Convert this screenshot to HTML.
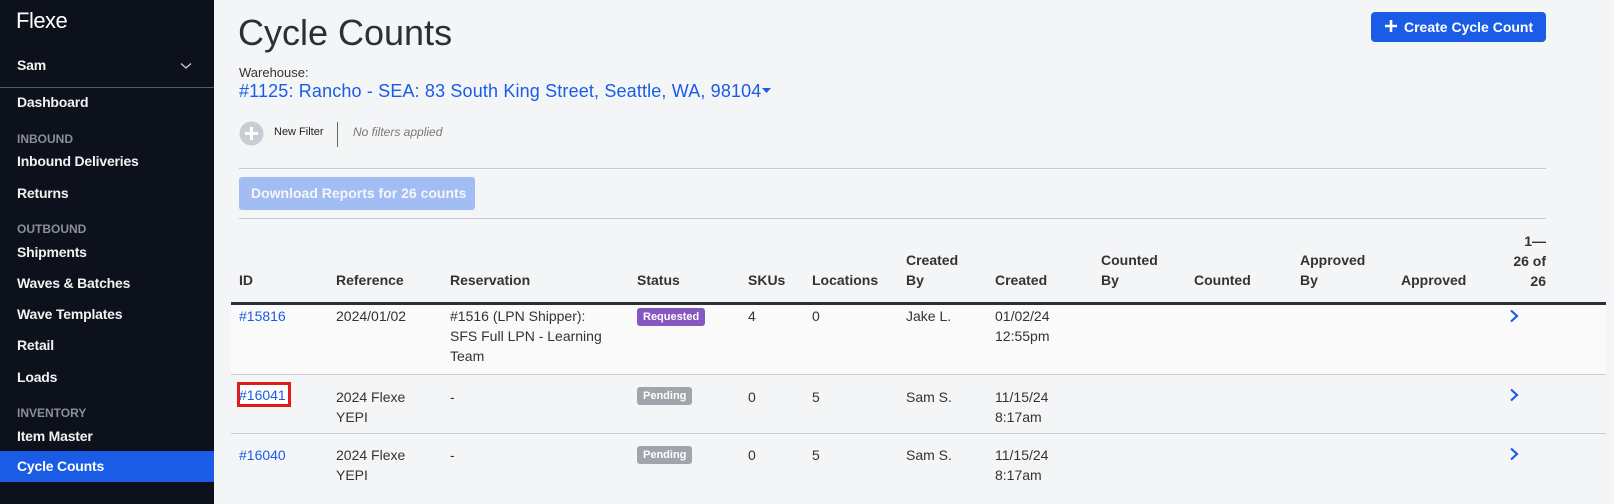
<!DOCTYPE html>
<html><head><meta charset="utf-8"><style>
*{margin:0;padding:0;box-sizing:border-box}
body{width:1614px;height:504px;overflow:hidden;background:#f4f5f7;font-family:"Liberation Sans",sans-serif;position:relative;color:#333}
.a{position:absolute;white-space:nowrap}
#sb{position:absolute;left:0;top:0;width:214px;height:504px;background:#0d111c;color:#fff}
#sb .i{position:absolute;left:17px;font-size:14px;font-weight:bold;color:#f2f2f2;letter-spacing:-0.2px}
#sb .h{position:absolute;left:17px;font-size:12px;font-weight:bold;color:#8a8e98}
.th{position:absolute;font-size:14px;font-weight:bold;color:#333;line-height:20px}
.td{position:absolute;font-size:14px;color:#333;line-height:20px}
.lk{color:#1a5ce5}
.bd{position:absolute;font-size:11px;font-weight:bold;color:#fff;padding:0 6px;height:18px;line-height:18px;border-radius:3px}
</style></head><body>
<div id="sb">
<div class="a" style="left:16px;top:8px;font-size:22px;color:#fff;letter-spacing:-0.5px">Flexe</div>
<div class="i" style="top:57px">Sam</div>
<svg class="a" style="left:180px;top:62px" width="12" height="8"><path d="M1 1.5 L6 6 L11 1.5" stroke="#ccc" stroke-width="1.3" fill="none"/></svg>
<div class="a" style="left:0;top:87px;width:214px;height:1px;background:#555a63"></div>
<div class="i" style="top:94px">Dashboard</div>
<div class="h" style="top:132px">INBOUND</div>
<div class="i" style="top:153px">Inbound Deliveries</div>
<div class="i" style="top:185px">Returns</div>
<div class="h" style="top:222px">OUTBOUND</div>
<div class="i" style="top:244px">Shipments</div>
<div class="i" style="top:275px">Waves &amp; Batches</div>
<div class="i" style="top:306px">Wave Templates</div>
<div class="i" style="top:337px">Retail</div>
<div class="i" style="top:369px">Loads</div>
<div class="h" style="top:406px">INVENTORY</div>
<div class="i" style="top:428px">Item Master</div>
<div class="a" style="left:0;top:451px;width:214px;height:31px;background:#1a5ce5"></div>
<div class="i" style="top:458px;color:#fff">Cycle Counts</div>
</div>

<div class="a" style="left:238px;top:12px;font-size:36px;color:#2c2f36">Cycle Counts</div>
<div class="a" style="left:1371px;top:12px;width:175px;height:30px;background:#1a5ce5;border-radius:4px;color:#fff;font-size:14px;font-weight:bold;line-height:30px;padding-left:33px">Create Cycle Count</div>
<svg class="a" style="left:1384px;top:19px" width="14" height="14"><path d="M7 1V13M1 7H13" stroke="#fff" stroke-width="2.6"/></svg>
<div class="a" style="left:239px;top:65px;font-size:13px;color:#333">Warehouse:</div>
<div class="a lk" style="left:239px;top:81px;font-size:18px;letter-spacing:0.15px">#1125: Rancho - SEA: 83 South King Street, Seattle, WA, 98104<svg width="9" height="6" style="margin-left:1px;vertical-align:3px"><path d="M0 0H9L4.5 5Z" fill="#1a5ce5"/></svg></div>
<svg class="a" style="left:239px;top:121px" width="25" height="25"><circle cx="12.5" cy="12.5" r="12" fill="#c9ccd2"/><path d="M12.5 6V19M6 12.5H19" stroke="#fff" stroke-width="3"/></svg>
<div class="a" style="left:274px;top:126px;font-size:11px;color:#222">New Filter</div>
<div class="a" style="left:337px;top:122px;width:1px;height:25px;background:#666"></div>
<div class="a" style="left:353px;top:125px;font-size:12px;font-style:italic;color:#777">No filters applied</div>
<div class="a" style="left:239px;top:168px;width:1307px;height:1px;background:#c8cad0"></div>
<div class="a" style="left:239px;top:177px;width:236px;height:33px;background:#a2bdf4;border-radius:3px;color:#f4f6fb;font-size:14px;font-weight:bold;line-height:33px;padding-left:12px">Download Reports for 26 counts</div>
<div class="a" style="left:239px;top:218px;width:1307px;height:1px;background:#c8cad0"></div>

<div class="th" style="left:239px;top:270px">ID</div>
<div class="th" style="left:336px;top:270px">Reference</div>
<div class="th" style="left:450px;top:270px">Reservation</div>
<div class="th" style="left:637px;top:270px">Status</div>
<div class="th" style="left:748px;top:270px">SKUs</div>
<div class="th" style="left:812px;top:270px">Locations</div>
<div class="th" style="left:906px;top:250px">Created<br>By</div>
<div class="th" style="left:995px;top:270px">Created</div>
<div class="th" style="left:1101px;top:250px">Counted<br>By</div>
<div class="th" style="left:1194px;top:270px">Counted</div>
<div class="th" style="left:1300px;top:250px">Approved<br>By</div>
<div class="th" style="left:1401px;top:270px">Approved</div>
<div class="th" style="left:1490px;top:231px;width:56px;text-align:right">1—<br>26 of<br>26</div>
<div class="a" style="left:231px;top:302px;width:1375px;height:3px;background:#2c2f36"></div>

<div class="a" style="left:231px;top:305px;width:1375px;height:70px;background:#fafafb"></div>
<div class="a" style="left:231px;top:374px;width:1375px;height:1px;background:#c8cad6"></div>
<div class="a" style="left:231px;top:433px;width:1375px;height:1px;background:#c8cad6"></div>

<div class="td lk" style="left:239px;top:306px">#15816</div>
<div class="td" style="left:336px;top:306px">2024/01/02</div>
<div class="td" style="left:450px;top:306px">#1516 (LPN Shipper):<br>SFS Full LPN - Learning<br>Team</div>
<div class="bd" style="left:637px;top:308px;background:#8458c0">Requested</div>
<div class="td" style="left:748px;top:306px">4</div>
<div class="td" style="left:812px;top:306px">0</div>
<div class="td" style="left:906px;top:306px">Jake L.</div>
<div class="td" style="left:995px;top:306px">01/02/24<br>12:55pm</div>

<div class="a" style="left:237px;top:382px;width:54px;height:25px;border:3px solid #e01b1b;background:#fff"></div>
<div class="td lk" style="left:239px;top:385px">#16041</div>
<div class="td" style="left:336px;top:387px">2024 Flexe<br>YEPI</div>
<div class="td" style="left:450px;top:387px">-</div>
<div class="bd" style="left:637px;top:387px;background:#a1a4ab">Pending</div>
<div class="td" style="left:748px;top:387px">0</div>
<div class="td" style="left:812px;top:387px">5</div>
<div class="td" style="left:906px;top:387px">Sam S.</div>
<div class="td" style="left:995px;top:387px">11/15/24<br>8:17am</div>

<div class="td lk" style="left:239px;top:445px">#16040</div>
<div class="td" style="left:336px;top:445px">2024 Flexe<br>YEPI</div>
<div class="td" style="left:450px;top:445px">-</div>
<div class="bd" style="left:637px;top:446px;background:#a1a4ab">Pending</div>
<div class="td" style="left:748px;top:445px">0</div>
<div class="td" style="left:812px;top:445px">5</div>
<div class="td" style="left:906px;top:445px">Sam S.</div>
<div class="td" style="left:995px;top:445px">11/15/24<br>8:17am</div>

<svg class="a" style="left:1509px;top:309px" width="10" height="14"><path d="M2 1.5L8 7L2 12.5" stroke="#1a5ce5" stroke-width="2.2" fill="none"/></svg>
<svg class="a" style="left:1509px;top:388px" width="10" height="14"><path d="M2 1.5L8 7L2 12.5" stroke="#1a5ce5" stroke-width="2.2" fill="none"/></svg>
<svg class="a" style="left:1509px;top:447px" width="10" height="14"><path d="M2 1.5L8 7L2 12.5" stroke="#1a5ce5" stroke-width="2.2" fill="none"/></svg>
</body></html>
